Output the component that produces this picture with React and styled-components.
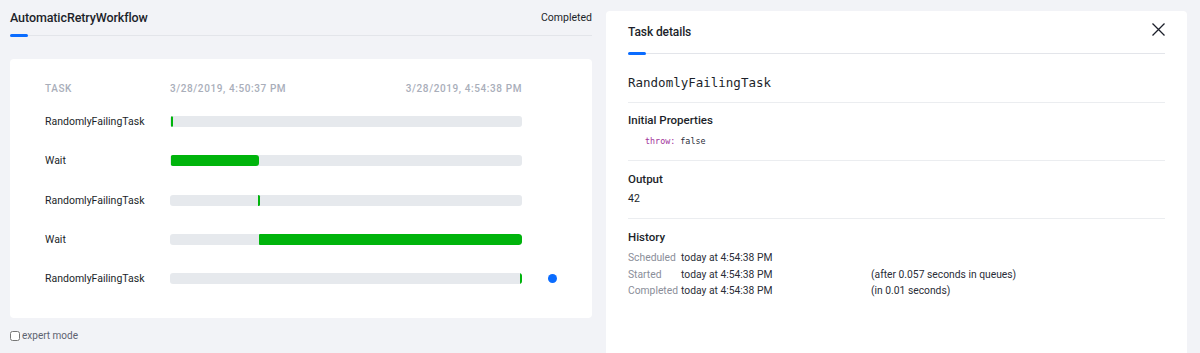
import React from 'react'
import styled, { createGlobalStyle } from 'styled-components'

// data
const tasks = [
  { name: 'RandomlyFailingTask', left: 1, width: 2 },
  { name: 'Wait', left: 1, width: 88 },
  { name: 'RandomlyFailingTask', left: 88, width: 2 },
  { name: 'Wait', left: 88.5, width: 263.5 },
  { name: 'RandomlyFailingTask', left: 350, width: 2, current: true },
]

const history = [
  { label: 'Scheduled', at: 'today at 4:54:38 PM', note: '' },
  { label: 'Started', at: 'today at 4:54:38 PM', note: '(after 0.057 seconds in queues)' },
  { label: 'Completed', at: 'today at 4:54:38 PM', note: '(in 0.01 seconds)' },
]

const GlobalStyle = createGlobalStyle`
  body {
    margin: 0;
    background: #f2f3f7;
    font-family: Roboto, 'Liberation Sans', sans-serif;
    color: #1c1f2a;
  }
`

const Page = styled.div`
  display: flex;
  align-items: flex-start;
  gap: 14px;
  padding: 0 13px 0 10px;
  height: 353px;
  overflow: hidden;
`

const LeftColumn = styled.div`
  width: 582px;
  flex-shrink: 0;
`

const TabHeader = styled.div`
  position: relative;
  display: flex;
  justify-content: space-between;
  align-items: center;
  height: ${(p) => p.height}px;
  border-bottom: 1px solid #e3e5ea;

  &::after {
    content: '';
    position: absolute;
    left: 0;
    bottom: -2px;
    width: 18px;
    height: 3px;
    border-radius: 2px;
    background: #0a6cff;
  }
`

const Title = styled.h1`
  margin: 0;
  font-size: ${(p) => p.size || 12.5}px;
  font-weight: 500;
  letter-spacing: -0.1px;
`

const Status = styled.span`
  font-size: 10.5px;
  color: #1c1f2a;
`

const Card = styled.div`
  background: #fff;
  border-radius: 4px;
  margin-top: 23px;
  height: 259px;
  box-sizing: border-box;
  padding: 24px 0 0 35px;
`

const Grid = styled.div`
  display: grid;
  grid-template-columns: 125px 352px 34.5px;
  align-items: center;
`

const HeadCell = styled.div`
  height: 12px;
  line-height: 12px;
  font-size: 10px;
  font-weight: 500;
  letter-spacing: 0.6px;
  text-transform: uppercase;
  color: #a9aeba;
  margin-bottom: 7px;
`

const Dates = styled(HeadCell)`
  display: flex;
  justify-content: space-between;
`

const TaskName = styled.div`
  height: 39.25px;
  display: flex;
  align-items: center;
  font-size: 10.5px;
  color: #1c1f2a;
`

const Track = styled.div`
  position: relative;
  height: 11px;
  border-radius: 3px;
  background: #e6e9ed;
  overflow: hidden;
`

const Segment = styled.div`
  position: absolute;
  top: 0;
  bottom: 0;
  background: #00b40c;
  border-radius: 1px 3px 3px 1px;
`

const Dot = styled.div`
  justify-self: end;
  width: 9px;
  height: 9px;
  border-radius: 50%;
  background: ${(p) => (p.on ? '#0a6cff' : 'transparent')};
`

const Expert = styled.label`
  display: flex;
  align-items: center;
  gap: 2px;
  margin-top: 12px;
  font-size: 10px;
  color: #5d6270;

  input {
    width: 10px;
    height: 10px;
    margin: 0;
  }
`

const Panel = styled.div`
  flex: 1;
  background: #fff;
  border-radius: 4px;
  margin-top: 11px;
  height: 360px;
  padding: 0 22px;
`

const CloseButton = styled.button`
  border: 0;
  background: none;
  padding: 0;
  margin-top: -6px;
  display: flex;
  color: #1c1f2a;
`

const Section = styled.div`
  padding: ${(p) => p.pad || '10px 0 12px'};
  border-bottom: ${(p) => (p.last ? 'none' : '1px solid #ebedf0')};
`

const MonoName = styled.div`
  font-family: 'DejaVu Sans Mono', 'Liberation Mono', monospace;
  font-size: 12.5px;
  line-height: 18px;
`

const Heading = styled.h2`
  margin: 0;
  font-size: 11.5px;
  line-height: 16px;
  font-weight: 500;
`

const Code = styled.div`
  margin-top: 7px;
  padding-left: 17px;
  font-family: 'DejaVu Sans Mono', 'Liberation Mono', monospace;
  font-size: 8.4px;
  line-height: 12px;
  color: #2a2d38;

  span {
    color: #a2349b;
  }
`

const Value = styled.div`
  margin-top: 5px;
  font-size: 10.5px;
  line-height: 14px;
`

const HistoryTable = styled.div`
  display: grid;
  grid-template-columns: 53px 190px auto;
  margin-top: 5px;
  font-size: 10.3px;
  line-height: 16.5px;
  color: #2a2d38;
`

const HistoryLabel = styled.div`
  color: #8a8e99;
`

const CloseIcon = () => (
  <svg width='13' height='13' viewBox='0 0 13 13'>
    <path d='M0.5 0.5 L12.5 12.5 M12.5 0.5 L0.5 12.5' stroke='currentColor' strokeWidth='1.3' fill='none' />
  </svg>
)

// markup
const App = () => {
  return (
    <>
      <GlobalStyle />
      <Page>
        <LeftColumn>
          <TabHeader height={35}>
            <Title>AutomaticRetryWorkflow</Title>
            <Status>Completed</Status>
          </TabHeader>
          <Card>
            <Grid>
              <HeadCell>Task</HeadCell>
              <Dates>
                <span>3/28/2019, 4:50:37 PM</span>
                <span>3/28/2019, 4:54:38 PM</span>
              </Dates>
              <div />
              {tasks.map((t, i) => (
                <React.Fragment key={i}>
                  <TaskName>{t.name}</TaskName>
                  <Track>
                    <Segment style={{ left: t.left, width: t.width }} />
                  </Track>
                  <Dot on={t.current} />
                </React.Fragment>
              ))}
            </Grid>
          </Card>
          <Expert>
            <input type='checkbox' />
            expert mode
          </Expert>
        </LeftColumn>

        <Panel>
          <TabHeader height={42}>
            <Title size={12}>Task details</Title>
            <CloseButton>
              <CloseIcon />
            </CloseButton>
          </TabHeader>
          <Section pad='20px 0 10px'>
            <MonoName>RandomlyFailingTask</MonoName>
          </Section>
          <Section pad='9px 0 13px'>
            <Heading>Initial Properties</Heading>
            <Code>
              <span>throw:</span> false
            </Code>
          </Section>
          <Section pad='10px 0 12px'>
            <Heading>Output</Heading>
            <Value>42</Value>
          </Section>
          <Section pad='10px 0 12px' last>
            <Heading>History</Heading>
            <HistoryTable>
              {history.map((h) => (
                <React.Fragment key={h.label}>
                  <HistoryLabel>{h.label}</HistoryLabel>
                  <div>{h.at}</div>
                  <div>{h.note}</div>
                </React.Fragment>
              ))}
            </HistoryTable>
          </Section>
        </Panel>
      </Page>
    </>
  )
}

export default App
